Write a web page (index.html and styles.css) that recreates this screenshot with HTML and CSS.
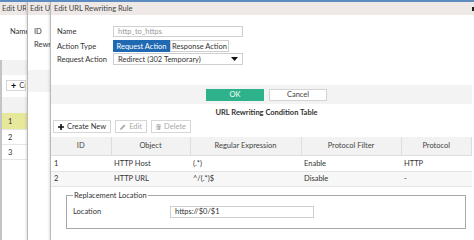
FILE: index.html
```html
<!DOCTYPE html>
<html lang="en">
  <head>
    <meta charset="UTF-8" />
    <title>Edit URL Rewriting Rule</title>
    <link rel="stylesheet" href="styles.css">
  </head>
  <body>
    <section class="win win-policy">
      <header class="win-title"><span class="clip">Edit URL Rewriting Policy</span></header>
      <div class="pol-name"><span class="clip">Name</span></div>
      <div class="pol-list">
        <div class="pol-band"></div>
        <div class="pol-tools"><span class="btn"><b>+</b> <span class="clip">Create New</span></span></div>
        <div class="pol-head"></div>
        <div class="pol-row selected">1</div>
        <div class="pol-row">2</div>
        <div class="pol-row">3</div>
      </div>
    </section>

    <section class="win win-rules">
      <header class="win-title"><span class="clip">Edit URL Rewriting Rules</span></header>
      <div class="rules-line">ID</div>
      <div class="rules-line"><span class="clip">Rewriting Rules</span></div>
      <div class="rules-band"></div>
    </section>

    <section class="win win-rule">
      <header class="win-title">Edit URL Rewriting Rule<span class="title-mark"></span></header>
      <div class="rule-body">
        <div class="form-row">
          <span class="form-label">Name</span>
          <span class="field placeholder">http_to_https</span>
        </div>
        <div class="form-row">
          <span class="form-label">Action Type</span>
          <span class="toggle">
            <span class="toggle-opt active">Request Action</span>
            <span class="toggle-opt">Response Action</span>
          </span>
        </div>
        <div class="form-row">
          <span class="form-label">Request Action</span>
          <span class="field select">Redirect (302 Temporary)
            <svg width="7" height="4" viewBox="0 0 7 4"><path d="M0 0h7L3.5 4z" fill="#111"/></svg>
          </span>
        </div>

        <div class="footer">
          <span class="btn-ok">OK</span>
          <span class="btn-cancel">Cancel</span>
        </div>

        <h3 class="table-title">URL Rewriting Condition Table</h3>
        <div class="toolbar">
          <span class="btn">
            <svg width="6" height="6" viewBox="0 0 6 6"><path d="M2.2 0h1.6v2.2H6v1.6H3.8V6H2.2V3.8H0V2.2h2.2z" fill="#111"/></svg>
            Create New
          </span>
          <span class="btn disabled">
            <svg width="6" height="6" viewBox="0 0 6 6"><path d="M0 6l.4-1.7L4.2.5l1.3 1.3-3.8 3.8z" fill="#aaa"/></svg>
            Edit
          </span>
          <span class="btn disabled">
            <svg width="5" height="6" viewBox="0 0 5 6"><path d="M1.6 0h1.8v.7H5v.8H0V.7h1.6zM.5 2h4l-.3 4H.8z M1.4 2.6v2.8h.5V2.6zm1.2 0v2.8h.5V2.6z" fill="#aaa" fill-rule="evenodd"/></svg>
            Delete
          </span>
        </div>

        <table class="cond-table">
          <colgroup>
            <col style="width: 60px">
            <col style="width: 79px">
            <col style="width: 111px">
            <col style="width: 100px">
            <col>
          </colgroup>
          <thead>
            <tr><th>ID</th><th>Object</th><th>Regular Expression</th><th>Protocol Filter</th><th>Protocol</th></tr>
          </thead>
          <tbody>
            <tr><td>1</td><td>HTTP Host</td><td>(.*)</td><td>Enable</td><td>HTTP</td></tr>
            <tr><td>2</td><td>HTTP URL</td><td>^/(.*)$</td><td>Disable</td><td>-</td></tr>
          </tbody>
        </table>

        <fieldset class="replace">
          <legend>Replacement Location</legend>
          <div class="replace-row">
            <span class="replace-label">Location</span>
            <span class="field replace-field">https://$0/$1</span>
          </div>
        </fieldset>
      </div>
    </section>
  </body>
</html>
```

FILE: styles.css
```css
* {
  box-sizing: border-box;
}

body {
  position: relative;
  margin: 0;
  width: 474px;
  height: 240px;
  overflow: hidden;
  border-top: 2px solid #5b8bbf;
  background-color: #fff;
  font-family: Lato, "Liberation Sans", sans-serif;
  font-size: 7.5px;
  color: #333;
}

.win {
  position: absolute;
  top: 0;
  bottom: 0;
  overflow: hidden;
  background-color: #fff;
  white-space: nowrap;
}

.clip {
  display: inline-block;
  overflow: hidden;
  vertical-align: top;
}

.win-policy {
  left: 0;
  width: 27px;
}

.win-policy .win-title .clip {
  width: 24px;
}

.win-policy .pol-name .clip {
  width: 17px;
}

.win-rules {
  left: 27px;
  width: 23px;
  border-left: 1px solid #b9b9b9;
  box-shadow: -1px 0 2px rgba(0, 0, 0, 0.12);
}

.win-rules .clip {
  width: 20px;
}

.win-rules .rules-line .clip {
  width: 16px;
}

.win-rule {
  left: 50px;
  right: 0;
  border-left: 1px solid #b9b9b9;
  box-shadow: -1px 0 2px rgba(0, 0, 0, 0.12);
  z-index: 2;
}

.win-title {
  display: flex;
  align-items: center;
  height: 13px;
  padding-left: 2px;
  background-color: #eee9e7;
  color: #444;
}

.win-rule .win-title {
  padding-left: 3px;
}

.title-mark {
  margin-left: auto;
  width: 2px;
  height: 4px;
  background-color: #222;
}

/* window 1 */
.pol-name {
  height: 11px;
  margin-top: 11px;
  padding-left: 10px;
  line-height: 11px;
}

.pol-list {
  margin-top: 23px;
  height: 200px;
  border-left: 2px solid #c4c4c4;
}

.pol-band {
  height: 15px;
  background-color: #f2f2f2;
}

.pol-tools {
  margin-top: 5px;
  padding-left: 4px;
}

.pol-tools .btn {
  height: 11px;
  padding-right: 0;
}

.pol-tools .clip {
  width: 6px;
}

.pol-head {
  height: 16px;
  margin-top: 6px;
  background-color: #f2f2f2;
}

.pol-row {
  height: 15px;
  padding-left: 6px;
  line-height: 15px;
  border-bottom: 1px solid #e6e6e6;
}

.pol-row.selected {
  height: 17px;
  line-height: 17px;
  background-color: #e6e89c;
}

/* window 2 */
.rules-line {
  height: 13px;
  padding-left: 6px;
  line-height: 13px;
}

.rules-line:first-of-type {
  margin-top: 10px;
}

.rules-band {
  height: 22px;
  margin-top: 19px;
  background-color: #f4f4f4;
}

/* window 3 */
.rule-body {
  padding: 11px 2px 0 0;
}

.form-row {
  display: flex;
  align-items: center;
  height: 12px;
  margin-bottom: 1px;
}

.form-row:first-child {
  height: 11px;
  margin-bottom: 3px;
}

.form-label {
  width: 62px;
  padding-left: 6px;
  color: #333;
}

.field {
  display: flex;
  align-items: center;
  width: 130px;
  height: 100%;
  padding: 0 4px;
  border: 1px solid #cfcfcf;
  background-color: #fff;
}

.placeholder {
  color: #9a9a9a;
}

.select {
  justify-content: space-between;
}

.toggle {
  display: flex;
  height: 100%;
}

.toggle-opt {
  display: flex;
  align-items: center;
  justify-content: center;
  width: 59px;
  border: 1px solid #cfcfcf;
}

.toggle-opt.active {
  width: 57px;
  border-color: #1f69b3;
  background-color: #1f69b3;
  color: #fff;
}

.footer {
  display: flex;
  justify-content: center;
  align-items: center;
  gap: 5px;
  height: 19px;
  margin-top: 20px;
  padding-left: 10px;
  background-color: #f3f3f3;
}

.btn-ok,
.btn-cancel {
  display: flex;
  align-items: center;
  justify-content: center;
  width: 58px;
  height: 12px;
}

.btn-ok {
  background-color: #2eb28b;
  color: #fff;
}

.btn-cancel {
  border: 1px solid #d4d4d4;
  background-color: #fff;
  color: #444;
}

.table-title {
  height: 10px;
  margin: 4px 0 0;
  padding-left: 10px;
  line-height: 10px;
  font-size: 7.5px;
  font-weight: 700;
  text-align: center;
  color: #333;
}

.toolbar {
  display: flex;
  gap: 4px;
  margin-top: 2px;
  padding-left: 2px;
}

.btn {
  display: inline-flex;
  align-items: center;
  gap: 3px;
  height: 13px;
  padding: 0 4px;
  border: 1px solid #d6d6d6;
  background-color: #fff;
  color: #333;
}

.btn b {
  font-size: 9px;
  color: #111;
}

.btn.disabled {
  color: #aaa;
}

.cond-table {
  width: 100%;
  margin-top: 4px;
  border-collapse: collapse;
  table-layout: fixed;
}

.cond-table th {
  height: 18px;
  padding: 0;
  border: 1px solid #dedede;
  border-top: 0;
  background-color: #f2f2f2;
  font-weight: 400;
  color: #444;
}

.cond-table th:first-child,
.cond-table td:first-child {
  border-left: 0;
}

.cond-table td {
  height: 16px;
  padding: 0 0 0 3px;
  border-bottom: 1px solid #e4e4e4;
}

.cond-table tbody tr:nth-child(2) td {
  height: 15px;
  background-color: #f7f7f7;
}

.replace {
  height: 38px;
  margin: 4px 6px 0 15px;
  padding: 0 0 0 6px;
  border: 1px solid #a8a8a8;
}

.replace legend {
  padding: 0 1px;
  line-height: 10px;
  color: #333;
}

.replace-row {
  display: flex;
  align-items: center;
  height: 12px;
  margin-top: 5px;
}

.replace-label {
  width: 97px;
}

.replace-field {
  width: 144px;
  color: #333;
}
```
